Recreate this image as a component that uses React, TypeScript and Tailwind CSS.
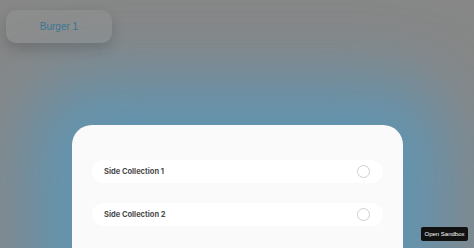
export default function App() {
  const items = ["Side Collection 1", "Side Collection 2"];
  return (
    <div className="relative h-[248px] w-full overflow-hidden bg-[#878787] font-['Inter',sans-serif]">
      <div className="ml-[6px] mt-[10px] flex h-[33px] w-[106px] items-center justify-center rounded-[10px] bg-[#8d8d8d] shadow-[0_6px_14px_rgba(0,0,0,0.18)]">
        <span className="font-['Liberation_Sans',sans-serif] text-[10px] text-[#3a7592]">Burger 1</span>
      </div>
      <div className="ml-[72px] mt-[82px] h-[200px] w-[331px] rounded-[20px] bg-[#fafafa] px-[20px] pt-[35px] shadow-[0_0_70px_45px_rgba(90,150,185,0.85)]">
        <div className="flex flex-col gap-[20px]">
          {items.map((t) => (
            <div key={t} className="flex h-[23px] items-center justify-between rounded-[12px] bg-white pl-[12px] pr-[13px]">
              <span className="text-[7.5px] font-bold text-[#4a4a4a]">{t}</span>
              <span className="h-[13px] w-[13px] rounded-full border border-[#cfcfcf]" />
            </div>
          ))}
        </div>
      </div>
      <div className="absolute bottom-[7px] right-[6px] flex h-[14px] w-[47px] items-center justify-center rounded-[2px] bg-[#111] font-['Liberation_Sans',sans-serif] text-[6px] text-white">
        Open Sandbox
      </div>
    </div>
  );
}
